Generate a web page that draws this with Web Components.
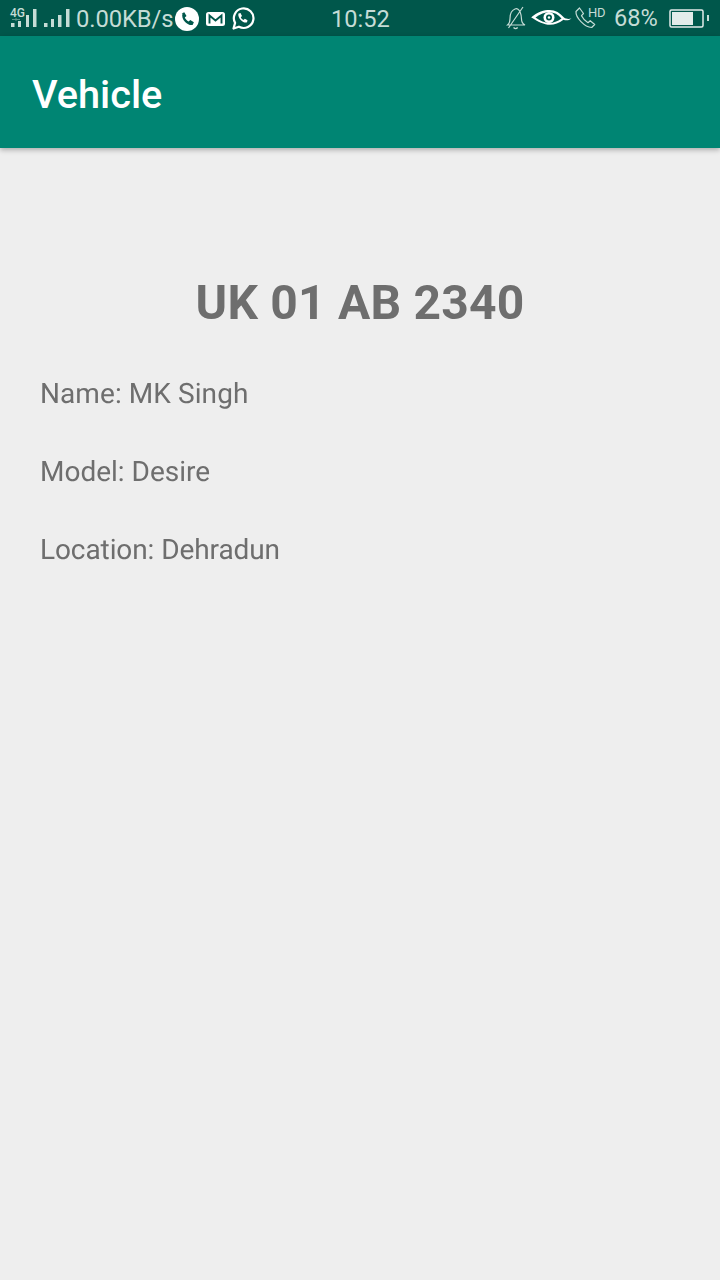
<!DOCTYPE html>
<html><head><meta charset="utf-8"><style>
html,body{margin:0;padding:0;height:1280px;overflow:hidden;background:#eeeeee;font-family:Roboto,sans-serif}
</style></head><body>
<vehicle-app>
<status-bar></status-bar>
<app-toolbar>Vehicle</app-toolbar>
<vehicle-detail plate="UK 01 AB 2340">
<detail-line style="letter-spacing:.08px">Name: MK Singh</detail-line>
<detail-line>Model: Desire</detail-line>
<detail-line style="letter-spacing:-.09px">Location: Dehradun</detail-line>
</vehicle-detail>
</vehicle-app>
<script>
function def(name,html){customElements.define(name,class extends HTMLElement{constructor(){super();this.attachShadow({mode:'open'}).innerHTML=html;}
connectedCallback(){const h=this.shadowRoot.querySelector('h1');if(h)h.textContent=this.getAttribute('plate');}});}
def('vehicle-app','<style>:host{display:flex;flex-direction:column;width:720px;height:1280px;background:#eee}</style><slot></slot>');
const c='#c5dcd6';
def('status-bar',`<style>
:host{display:flex;align-items:center;height:36px;background:#00574b;color:${c};font:400 24px/36px Roboto,sans-serif;position:relative}
svg{display:block;flex:none}
.left,.right{display:flex;align-items:center;height:36px}
.left{padding-left:9px}
.clock{position:absolute;left:331px;top:1px;font-size:23.6px;color:${c}}
.right{position:absolute;left:506px;top:0}
</style>
<div class="left">
<svg width="61" height="36" viewBox="9 0 61 36">
<text x="10" y="16.500" font-family="Roboto" font-size="12" font-weight="500" fill="${c}">4G</text>
<path d="M12 19.500h8M16 18v3" stroke="${c}" stroke-width="1" opacity=".45"/>
<rect x="11" y="23" width="3.500" height="4" fill="${c}"/><rect x="18" y="21" width="3" height="6" fill="${c}"/><rect x="26" y="15" width="3" height="12" fill="${c}"/><rect x="33" y="9" width="3.500" height="18" fill="${c}"/>
<rect x="44" y="23" width="3.500" height="4" fill="${c}"/><rect x="51" y="19" width="3" height="8" fill="${c}"/><rect x="58" y="15" width="3.500" height="12" fill="${c}"/><rect x="66" y="9" width="3.500" height="18" fill="${c}"/>
</svg>
<span style="margin-left:6px;margin-top:1px;font-size:23.8px;letter-spacing:-.1px">0.00KB/s</span>
<svg width="80" height="36" viewBox="175 0 80 36" style="margin-left:2px">
<circle cx="187" cy="19" r="12" fill="#fff"/>
<path d="M181.500 13.500l2.800-1.300 2.200 3.800-1.700 1.600c.8 1.700 2 3 3.800 4l1.700-1.600 3.600 2.300-1.300 2.600c-2 .7-5.100-.5-7.500-2.900-2.500-2.500-3.500-5.800-2.600-8.500z" fill="#00574b"/>
<rect x="206" y="12" width="19" height="14" rx="2.500" fill="#fff"/>
<path d="M209.500 23.500v-8l6 5 6-5v8" fill="none" stroke="#00574b" stroke-width="1.900"/>
<g transform="translate(-1 0)">
<path d="M234.500 28.500l1.600-5.600a9.800 9.800 0 1 1 3.800 3.800z" fill="none" stroke="#fff" stroke-width="2.200" stroke-linejoin="round"/>
<path d="M239.500 13.500l2-.5 1.500 3-1.200 1.200c.6 1.300 1.500 2.200 2.800 2.800l1.200-1.200 2.700 1.500-.5 2c-1.700.8-4 0-6-2s-3.300-5-2.500-6.800z" fill="#fff"/>
</g>
</svg>
</div>
<div class="clock">10:52</div>
<div class="right">
<svg width="21" height="36" viewBox="506 0 21 36"><path d="M507.500 25c2-1.500 2.500-3.500 2.500-6.500 0-4 1-8 5-9.500 1-.4 2-.4 3 .2 3 1.800 3.300 5.800 3.500 9.800 0 2.500 1 4.800 3.500 6zM513.500 27.500c1.300 1.200 3 1.200 4.200 0M508.500 28L523 7" fill="none" stroke="${c}" stroke-width="1.200"/></svg>
<svg width="41" height="36" viewBox="531 0 41 36" style="margin-left:4px"><path d="M531 17.500C538 11.500 544 10 549.500 10c6 0 10.500 3 14.500 7.500 2 1.500 4.500 1.800 7.500 1-2.500 2-5.500 2.300-8 1.300-4.500 3.400-9 5-13.500 5-6 0-12-3-18.500-7.300z" fill="#fff"/><path d="M535.500 17.500C540 14 545 12.300 549.500 12.300s8.500 2.200 12 6.100c-4 3-8 4.400-12 4.400-4.800 0-9.300-2-14-5.300z" fill="#00574b"/><circle cx="549" cy="17.500" r="5.500" fill="#fff"/><circle cx="549" cy="17.500" r="3" fill="#00574b"/><circle cx="549" cy="17.500" r="1.200" fill="#fff"/></svg>
<svg width="32" height="36" viewBox="575 0 32 36" style="margin-left:3px"><path d="M576 11.500l3.500-3.500 4 5.500-2 2.200c1.500 3 3.500 5.200 6.500 7l2.200-2 4.500 3.800-3 3C584.500 27 575.500 17.500 576 11.500z" fill="none" stroke="${c}" stroke-width="1.200" stroke-linejoin="round"/><text x="588" y="17" font-family="Roboto" font-size="13" letter-spacing="-.3" fill="${c}">HD</text></svg>
<span style="margin-left:7px;margin-top:-1px;font-size:23.6px">68%</span>
<svg width="41" height="36" viewBox="669 0 41 36" style="margin-left:11px"><rect x="670" y="10" width="33" height="17" rx="1.500" fill="none" stroke="#e3ecea" stroke-width="1.500"/><rect x="672" y="12" width="21" height="13" fill="#e3ecea"/><rect x="707" y="15" width="2" height="6" fill="${c}"/></svg>
</div>`);
def('app-toolbar',`<style>
:host{display:flex;align-items:center;box-sizing:border-box;height:112px;padding:6px 0 0 32px;background:#008573;color:#fff;font:500 39.7px/1 Roboto,sans-serif;box-shadow:0 2px 5px rgba(0,0,0,.28);position:relative}
</style><slot></slot>`);
def('vehicle-detail',`<style>
:host{display:flex;flex-direction:column;padding:123px 40px 0;will-change:opacity}
h1{margin:0 0 40px;font:700 48px/64px Roboto,sans-serif;letter-spacing:.22px;color:#6e6e6e;text-align:center}
.rows{display:flex;flex-direction:column;gap:40px}
</style><h1></h1><div class="rows"><slot></slot></div>`);
def('detail-line',`<style>:host{display:block;font:400 28px/38px Roboto,sans-serif;color:#6e6e6e;text-rendering:geometricPrecision}</style><slot></slot>`);
</script>
</body></html>
